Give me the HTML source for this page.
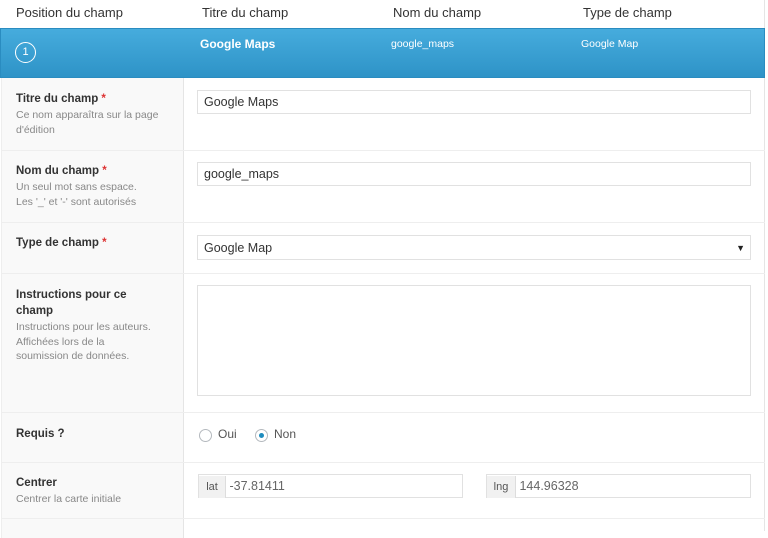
<!DOCTYPE html>
<html><head><meta charset="utf-8"><style>
*{box-sizing:border-box;margin:0;padding:0}
body{width:768px;height:531px;overflow:hidden;background:#fff;font-family:"Liberation Sans",sans-serif;color:#333;position:relative}
.a{position:absolute}
.hd{font-size:13px;color:#333;top:5px}
.bar{left:0;top:28px;width:765px;height:50px;background:linear-gradient(#46acdd,#2e93c7);border:1px solid #2a8cc0}
.bt{color:#fff;font-size:11px;top:38px}
.left{left:1px;top:78px;width:183px;height:460px;background:#f9f9f9;border-right:1px solid #e5e5e5;border-left:1px solid #eee}
.rl{left:1px;width:764px;height:1px;background:#eee}
.lab{left:16px;font-size:11.5px;font-weight:bold;color:#333;line-height:16px;width:160px}
.lab i{color:#dd3333;font-style:normal}
.sub{left:16px;font-size:10.5px;color:#888;line-height:14.5px;width:165px}
.in{border:1px solid #e1e1e1;background:#fff;font-size:12.5px;color:#333;padding-left:6px;line-height:22px;height:24px}
.rad{width:13px;height:13px;border:1px solid #b4b9be;border-radius:50%;background:#fff}
</style></head><body>
<div class="a" style="left:764px;top:0;width:1px;height:531px;background:#e5e5e5"></div>
<div class="a hd" style="left:16px">Position du champ</div>
<div class="a hd" style="left:202px">Titre du champ</div>
<div class="a hd" style="left:393px">Nom du champ</div>
<div class="a hd" style="left:583px">Type de champ</div>
<div class="a bar"></div>
<div class="a" style="left:15px;top:42px;width:21px;height:21px;border:1px solid #fff;border-radius:50%;color:#fff;font-size:11px;text-align:center;line-height:19px">1</div>
<div class="a bt" style="left:200px;font-weight:bold;font-size:12px;top:37px">Google Maps</div>
<div class="a bt" style="left:391px;font-size:10.5px">google_maps</div>
<div class="a bt" style="left:581px;font-size:10.5px">Google Map</div>

<div class="a left"></div>
<div class="a rl" style="top:150px"></div>
<div class="a rl" style="top:222px"></div>
<div class="a rl" style="top:273px"></div>
<div class="a rl" style="top:412px"></div>
<div class="a rl" style="top:462px"></div>
<div class="a rl" style="top:518px"></div>

<div class="a lab" style="top:91px">Titre du champ <i>*</i></div>
<div class="a sub" style="top:108px">Ce nom apparaîtra sur la page d'édition</div>
<div class="a in" style="left:197px;top:90px;width:554px">Google Maps</div>

<div class="a lab" style="top:163px">Nom du champ <i>*</i></div>
<div class="a sub" style="top:180px">Un seul mot sans espace.<br>Les '_' et '-' sont autorisés</div>
<div class="a in" style="left:197px;top:162px;width:554px">google_maps</div>

<div class="a lab" style="top:235px">Type de champ <i>*</i></div>
<div class="a in" style="left:197px;top:235px;width:554px;line-height:24px;height:25px">Google Map<span style="position:absolute;right:5px;font-size:9px;color:#222">▼</span></div>

<div class="a lab" style="top:287px;width:140px">Instructions pour ce champ</div>
<div class="a sub" style="top:320px">Instructions pour les auteurs.<br>Affichées lors de la<br>soumission de données.</div>
<div class="a in" style="left:197px;top:285px;width:554px;height:111px"></div>

<div class="a lab" style="top:426px">Requis ?</div>
<div class="a rad" style="left:199px;top:429px"></div>
<div class="a" style="left:218px;top:427px;font-size:12px;color:#555">Oui</div>
<div class="a rad" style="left:255px;top:429px"><div style="width:5px;height:5px;border-radius:50%;background:#1e8cbe;margin:3px"></div></div>
<div class="a" style="left:274px;top:427px;font-size:12px;color:#555">Non</div>

<div class="a lab" style="top:475px">Centrer</div>
<div class="a sub" style="top:492px">Centrer la carte initiale</div>
<div class="a in" style="left:198px;top:474px;width:265px;padding-left:0;color:#666;background:#fff"><span style="display:inline-block;width:27px;background:#f1f1f1;border-right:1px solid #ddd;text-align:center;font-size:11px;color:#555;height:22px">lat</span> -37.81411</div>
<div class="a in" style="left:486px;top:474px;width:265px;padding-left:0;color:#666"><span style="display:inline-block;width:29px;background:#f1f1f1;border-right:1px solid #ddd;text-align:center;font-size:11px;color:#555;height:22px">lng</span> 144.96328</div>
</body></html>
